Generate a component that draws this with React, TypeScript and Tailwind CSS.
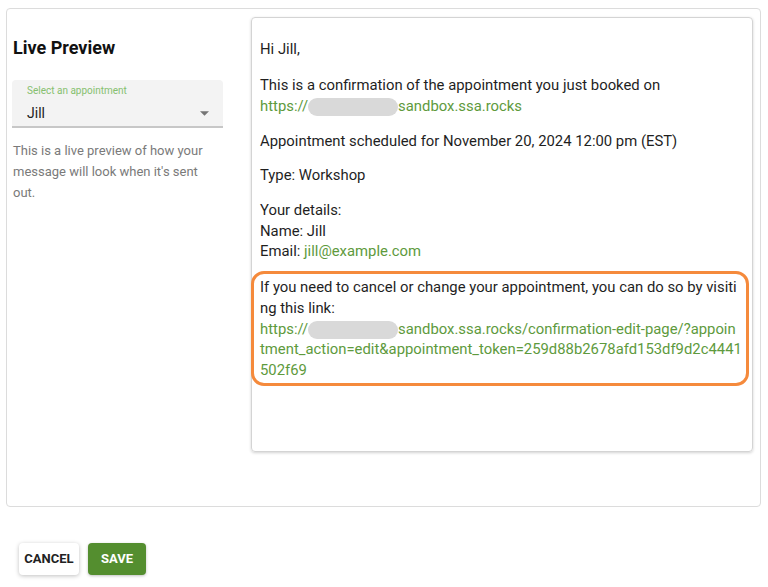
const Blur = () => (
  <span className="inline-block h-[18px] w-[90px] rounded-full bg-[#d9d9d9] align-[-5px]" />
);

export default function App() {
  return (
    <div className="min-h-[587px] bg-white font-['Roboto',sans-serif] text-[#1f1f1f]">
      <div className="pl-[6px] pr-[7px] pt-[8px]">
        <div className="flex h-[499px] rounded-[4px] border border-[#dcdcdc]">
          <div className="w-[244px] shrink-0 pl-[5px] pr-[28px] pt-[28px]">
            <h2 className="pl-[1px] text-[18px] font-bold leading-[22px] text-[#111]">Live Preview</h2>
            <div className="mt-[21px] h-[48px] rounded-t-[4px] border-b-2 border-[#c7c7c7] bg-[#f3f3f3] pl-[15px] pr-[14px] pt-[4px]">
              <div className="text-[10px] leading-[13px] text-[#86c06f]">Select an appointment</div>
              <div className="mt-[7px] flex items-center justify-between">
                <span className="text-[14px] leading-[18px] text-[#222]">Jill</span>
                <svg width="9" height="5" viewBox="0 0 10 5">
                  <path d="M0 0 L10 0 L5 5 Z" fill="#757575" />
                </svg>
              </div>
            </div>
            <p className="mt-[12px] pl-[1px] pr-[5px] text-[13px] leading-[21px] text-[#7a7a7a]">
              This is a live preview of how your message will look when it's sent out.
            </p>
          </div>
          <div className="pt-[8px]">
            <div className="h-[435px] w-[502px] rounded-[4px] border border-[#d4d4d4] px-[8px] pt-[21px] text-[14.85px] leading-[20.75px] shadow-[0_1px_3px_rgba(0,0,0,0.18)] [word-break:break-all]">
              <p>Hi Jill,</p>
              <p className="mt-[15px]">
                This is a confirmation of the appointment you just booked on
                <br />
                <span className="text-[#5e9a3d]">
                  https://<Blur />sandbox.ssa.rocks
                </span>
              </p>
              <p className="mt-[15px]">Appointment scheduled for November 20, 2024 12:00 pm (EST)</p>
              <p className="mt-[13px]">Type: Workshop</p>
              <p className="mt-[14px]">
                Your details:
                <br />
                Name: Jill
                <br />
                Email: <span className="text-[#5e9a3d]">jill@example.com</span>
              </p>
              <div className="relative mt-[15px]">
                <p>
                  If you need to cancel or change your appointment, you can do so by visiting this link:
                </p>
                <p className="whitespace-nowrap text-[#5e9a3d]">
                  https://<Blur />sandbox.ssa.rocks/confirmation-edit-page/?appoin
                  <br />
                  tment_action=edit&amp;appointment_token=259d88b2678afd153df9d2c4441
                  <br />
                  502f69
                </p>
                <span className="pointer-events-none absolute -bottom-[5px] -left-[9px] -right-[5px] -top-[6px] rounded-[13px] border-[3px] border-[#f58a3c]" />
              </div>
            </div>
          </div>
        </div>
      </div>
      <div className="flex gap-[9px] pl-[19px] pt-[36px]">
        <button className="h-[32px] w-[60px] rounded-[4px] bg-white text-[13px] font-bold text-[#222] shadow-[0_1px_4px_rgba(0,0,0,0.25)]">
          CANCEL
        </button>
        <button className="h-[32px] w-[58px] rounded-[4px] bg-[#548e2f] text-[13px] font-bold text-white shadow-[0_1px_3px_rgba(0,0,0,0.25)]">
          SAVE
        </button>
      </div>
    </div>
  );
}
